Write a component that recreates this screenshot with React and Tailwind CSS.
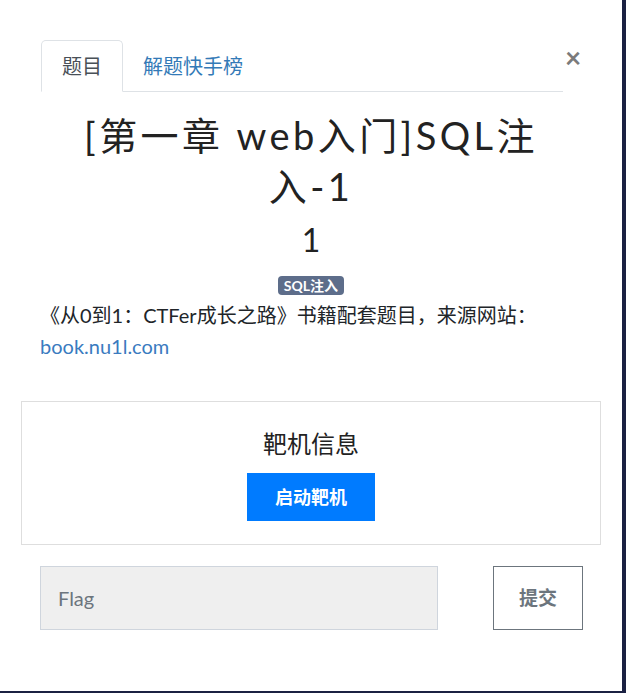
import React from "react";

const cjk = { fontFamily: '"Lato", "Noto Sans CJK SC", sans-serif' };

const App = () => {
  return (
    <div className="w-[626px] h-[693px] bg-[#1b2142] overflow-hidden" style={cjk}>
      <div className="w-[622px] h-[691px] bg-white text-[#212529]">
        {/* tabs + close */}
        <div className="flex items-start pt-[40px] pl-[41px] pr-[41px]">
          <ul className="flex flex-1 border-b border-[#dee2e6]">
            <li className="-mb-px px-[20px] h-[52px] flex items-center border border-[#dee2e6] border-b-white rounded-t-[5px] text-[20px] text-[#495057] bg-white">
              题目
            </li>
            <li className="px-[20px] h-[51px] flex items-center text-[20px] text-[#337ab7]">
              解题快手榜
            </li>
          </ul>
          <button className="w-[16px] ml-[2px] mt-[3px] text-[28px] leading-[28px] font-bold text-[#7b7b7b]">
            ×
          </button>
        </div>

        {/* title */}
        <h3 className="mx-auto mt-[18px] w-[470px] text-center text-[38px] leading-[51px] font-normal tracking-[0.09em] text-[#222]">
          [第一章 web入门]SQL注入-1
        </h3>
        <div className="mt-[8px] text-center text-[32px] leading-[40px] text-[#222]">1</div>
        <div className="mt-[16px] flex justify-center">
          <span className="px-[6px] h-[19px] flex items-center rounded-[4px] bg-[#5d6d8a] text-white text-[14px] font-bold">
            SQL注入
          </span>
        </div>
        <p className="mt-[5px] px-[40px] text-[20px] leading-[31px]">
          《从0到1：CTFer成长之路》书籍配套题目，来源网站：
          <br />
          <a className="text-[#3a7bbf]">book.nu1l.com</a>
        </p>

        {/* target box */}
        <div className="mt-[39px] mx-[21px] border border-[#dedede] h-[144px] flex flex-col items-center">
          <div className="mt-[26px] text-[24px] leading-[32px] text-[#222]">靶机信息</div>
          <button className="mt-[13px] w-[128px] h-[48px] bg-[#007bff] text-white text-[18px] font-bold">
            启动靶机
          </button>
        </div>

        {/* flag row */}
        <div className="mt-[21px] flex pl-[40px]">
          <input
            placeholder="Flag"
            className="w-[398px] h-[64px] bg-[#efefef] border border-[#cfd5dd] px-[17px] text-[20px] text-[#495057] placeholder:text-[#6c757d] outline-none"
          />
          <button className="ml-[55px] w-[90px] h-[64px] border border-[#6c757d] bg-white text-[19px] font-bold text-[#6c757d]">
            提交
          </button>
        </div>
      </div>
    </div>
  );
};

export default App;
